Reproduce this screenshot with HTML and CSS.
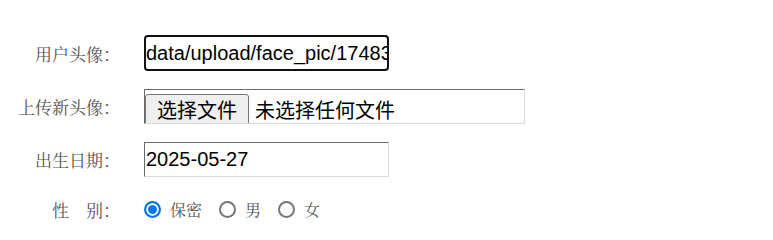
FILE: index.html
```html
<!DOCTYPE html>
<html lang="zh-CN">
<head>
<meta charset="utf-8">
<title>资料</title>
<link rel="stylesheet" href="styles.css">
</head>
<body>
<form class="form">
  <div class="row row-first">
    <label class="label">用户头像：</label>
    <input class="field field-focus" type="text" value="data/upload/face_pic/17483" readonly>
  </div>
  <div class="row">
    <label class="label">上传新头像：</label>
    <div class="file">
      <span class="file-btn">选择文件</span>
      <span class="file-name">未选择任何文件</span>
    </div>
  </div>
  <div class="row">
    <label class="label">出生日期：</label>
    <input class="field field-inset" type="text" value="2025-05-27" readonly>
  </div>
  <div class="row row-radio">
    <label class="label">性&emsp;别：</label>
    <div class="radios">
      <label class="opt"><input class="radio" type="radio" name="sex" checked><span>保密</span></label>
      <label class="opt"><input class="radio" type="radio" name="sex"><span>男</span></label>
      <label class="opt"><input class="radio" type="radio" name="sex"><span>女</span></label>
    </div>
  </div>
</form>
</body>
</html>
```

FILE: styles.css
```css
html, body {
  margin: 0;
  padding: 0;
  background: #fff;
}
body {
  margin: 8px;
  font-family: "Noto Serif CJK SC", "Noto Sans CJK SC", serif;
}
.form {
  display: flex;
  flex-direction: column;
  gap: 18px;
  padding-top: 27px;
}
.row {
  display: flex;
  align-items: center;
  height: 35px;
}
.row-first {
  height: 36px;
}
.row-radio {
  height: 28px;
}
.label {
  width: 112px;
  margin-right: 24px;
  text-align: right;
  font-size: 17px;
  color: #555;
  white-space: nowrap;
}
.field {
  box-sizing: border-box;
  width: 245px;
  margin: 0;
  padding: 0 0 0 1px;
  font-family: "Liberation Sans", Arial, sans-serif;
  font-size: 20px;
  color: #000;
  background: #fff;
  outline: none;
}
.field-focus {
  height: 36px;
  border: 2px solid #101010;
  border-radius: 4px;
  padding-left: 0;
}
.field-inset {
  height: 35px;
  border: 1px solid;
  border-color: #6b6b6b #dcdcdc #dcdcdc #6b6b6b;
}
.file {
  box-sizing: border-box;
  width: 381px;
  height: 35px;
  border: 1px solid;
  border-color: #6b6b6b #dcdcdc #dcdcdc #6b6b6b;
  overflow: hidden;
  display: flex;
  align-items: flex-start;
  padding-top: 4px;
  font-family: "Noto Sans CJK SC", sans-serif;
  font-size: 20px;
  color: #000;
  white-space: nowrap;
}
.file-btn {
  box-sizing: border-box;
  height: 34px;
  padding: 0 11px;
  border: 1px solid #767676;
  border-radius: 3px;
  background: #efefef;
  line-height: 30px;
}
.file-name {
  margin-left: 6px;
  line-height: 32px;
}
.radios {
  display: flex;
  align-items: center;
  gap: 17px;
}
.opt {
  display: flex;
  align-items: center;
  gap: 9px;
  font-size: 16px;
  color: #555;
}
.radio {
  appearance: none;
  -webkit-appearance: none;
  box-sizing: border-box;
  width: 17px;
  height: 17px;
  margin: 0;
  border: 2px solid #767676;
  border-radius: 50%;
  background: #fff;
}
.radio:checked {
  border-color: #0075ff;
  background: #0075ff;
  box-shadow: inset 0 0 0 2px #fff;
}
```
